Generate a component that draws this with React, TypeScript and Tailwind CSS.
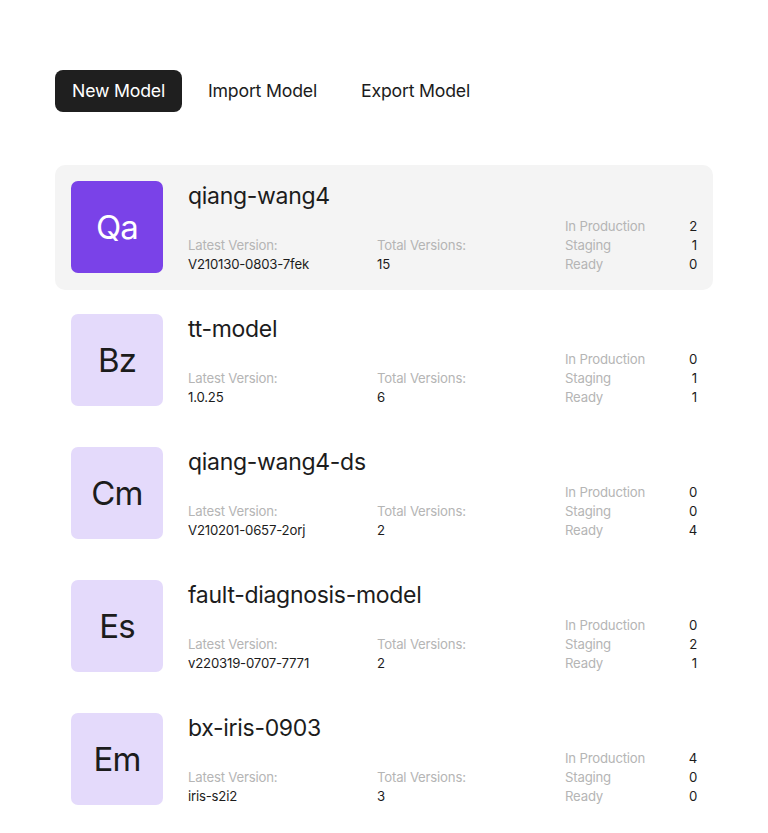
const models = [
  { initials: 'Qa', name: 'qiang-wang4', latest: 'V210130-0803-7fek', total: 15, prod: 2, staging: 1, ready: 0, active: true },
  { initials: 'Bz', name: 'tt-model', latest: '1.0.25', total: 6, prod: 0, staging: 1, ready: 1 },
  { initials: 'Cm', name: 'qiang-wang4-ds', latest: 'V210201-0657-2orj', total: 2, prod: 0, staging: 0, ready: 4 },
  { initials: 'Es', name: 'fault-diagnosis-model', latest: 'v220319-0707-7771', total: 2, prod: 0, staging: 2, ready: 1 },
  { initials: 'Em', name: 'bx-iris-0903', latest: 'iris-s2i2', total: 3, prod: 4, staging: 0, ready: 0 },
]

type Model = (typeof models)[number] & { active?: boolean }

function ModelRow({ m }: { m: Model }) {
  return (
    <div className={`flex gap-[25px] rounded-[10px] p-4 ${m.active ? 'bg-[#f4f4f4]' : ''}`}>
      <div
        className={`flex h-[92px] w-[92px] shrink-0 items-center justify-center rounded-[7px] pt-px text-[33px] tracking-[-0.8px] ${
          m.active ? 'bg-[#7a42e8] text-white' : 'bg-[#e4dafb] text-[#1c1c1c]'
        }`}
      >
        {m.initials}
      </div>
      <div className="flex h-[93px] flex-1 flex-col justify-between">
        <div className="pt-px text-[23px] leading-[28px] tracking-[-0.3px] text-[#1c1c1c]">{m.name}</div>
        <div className="flex items-end text-[13.2px] leading-[19px]">
          <div className="w-[189px]">
            <div className="text-[#b5b5b5]">Latest Version:</div>
            <div className="text-[#1c1c1c]">{m.latest}</div>
          </div>
          <div className="w-[188px]">
            <div className="text-[#b5b5b5]">Total Versions:</div>
            <div className="text-[#1c1c1c]">{m.total}</div>
          </div>
          <div className="flex-1">
            <div className="flex justify-between">
              <span className="text-[#b5b5b5]">In Production</span>
              <span className="text-[#1c1c1c]">{m.prod}</span>
            </div>
            <div className="flex justify-between">
              <span className="text-[#b5b5b5]">Staging</span>
              <span className="text-[#1c1c1c]">{m.staging}</span>
            </div>
            <div className="flex justify-between">
              <span className="text-[#b5b5b5]">Ready</span>
              <span className="text-[#1c1c1c]">{m.ready}</span>
            </div>
          </div>
        </div>
      </div>
    </div>
  )
}

export default function App() {
  return (
    <div className="min-h-[833px] bg-white px-[55px] pt-[70px] font-['Inter',sans-serif] tracking-[-0.2px]">
      <div className="flex items-center text-[17.7px]">
        <button
          type="button"
          className="h-[42px] w-[127px] rounded-[8px] bg-[#1f1f1f] pt-px text-white"
        >
          New Model
        </button>
        <button type="button" className="ml-[26px] pt-px text-[#1c1c1c]">
          Import Model
        </button>
        <button type="button" className="ml-[44px] pt-px text-[#1c1c1c]">
          Export Model
        </button>
      </div>
      <div className="mt-[53px] flex w-[658px] flex-col gap-[8px]">
        {models.map((m) => (
          <ModelRow key={m.name} m={m} />
        ))}
      </div>
    </div>
  )
}
